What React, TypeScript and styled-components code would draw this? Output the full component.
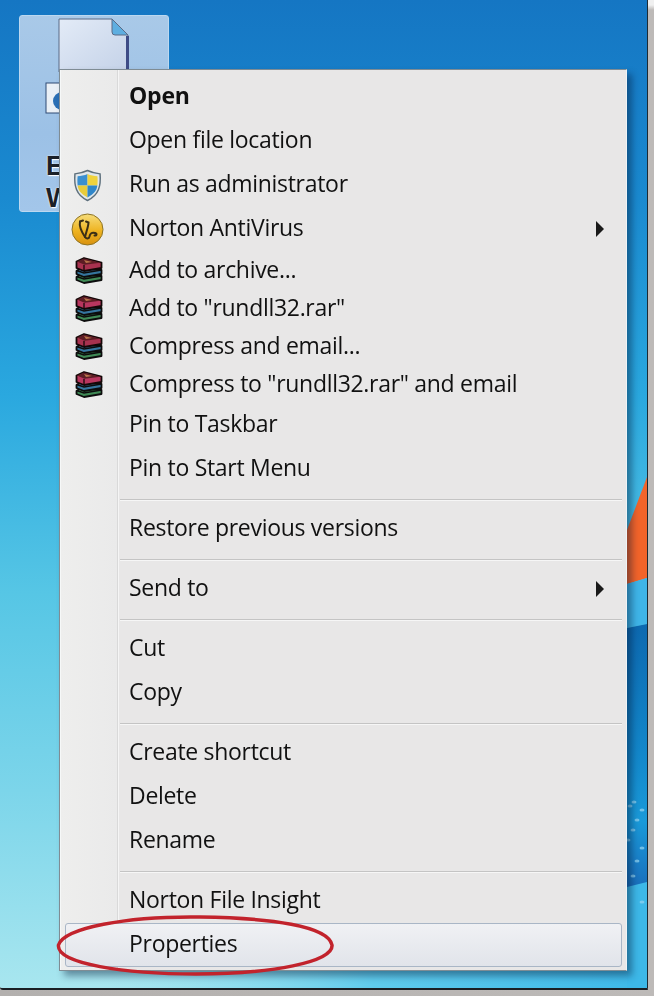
import React from "react";
import styled, { createGlobalStyle } from "styled-components";

const Global = createGlobalStyle`
  html, body { margin: 0; padding: 0; background: #b7b4b2; }
  #root { width: 654px; height: 996px; overflow: hidden; }
`;

const Screen = styled.div`
  position: relative;
  width: 654px;
  height: 996px;
  background:
    linear-gradient(180deg, #f0f0f0 0, #f0f0f0 5px, rgba(240, 240, 240, 0) 10px),
    linear-gradient(90deg, #b3b0ae, #bdbab8);
`;

const Desktop = styled.div`
  position: relative;
  width: 647px;
  height: 988px;
  overflow: hidden;
  border-right: 1px solid #1d2a33;
  border-bottom: 2px solid #1a1f24;
  border-bottom-left-radius: 3px;
  box-sizing: content-box;
`;

const Wallpaper = styled.svg`
  position: absolute;
  inset: 0;
  display: block;
`;

const SelectedIcon = styled.div`
  position: absolute;
  left: 19px;
  top: 15px;
  width: 150px;
  height: 197px;
  box-sizing: border-box;
  border: 1px solid #bcd8f0;
  border-radius: 3px;
  background: linear-gradient(180deg, #a9c9e8, #9cc1e6 60%, #a3c6ea);
`;

const IconArt = styled.svg`
  position: absolute;
  inset: 0;
  display: block;
`;

const IconLabel = styled.div`
  position: absolute;
  left: 46px;
  top: 150px;
  font-family: "Liberation Sans", sans-serif;
  font-size: 27px;
  font-weight: 700;
  line-height: 32px;
  color: #1a2028;
  text-shadow: 0 0 2px #fff, 1px 1px 1px #fff;
`;

const Menu = styled.div`
  position: absolute;
  left: 59px;
  top: 69px;
  width: 568px;
  height: 902px;
  box-sizing: border-box;
  padding: 5px 4px 0 0;
  border: 1px solid #7f8c94;
  border-right-color: #eef3f6;
  border-bottom-color: #7f8c94;
  background:
    linear-gradient(#d9d9d9, #d9d9d9) 57px 0 / 1px 100% no-repeat,
    linear-gradient(#f5f5f5, #f5f5f5) 58px 0 / 1px 100% no-repeat,
    linear-gradient(90deg, #eeeeed 0, #eaeaea 57px, #e8e7e7 59px);
  box-shadow: 5px 5px 7px rgba(0, 20, 50, 0.42), inset 1px 0 0 #f6f8f8;
  font-family: "Open Sans", sans-serif;
  color: #111;
`;

const Row = styled.div<{ $short?: boolean; $selected?: boolean }>`
  display: grid;
  grid-template-columns: ${(p) => (p.$selected ? "54px" : "60px")} 1fr 30px;
  align-items: center;
  height: ${(p) => (p.$short ? "38px" : "44px")};
  box-sizing: border-box;
  ${(p) =>
    p.$selected &&
    `
    margin-left: 5px;
    border: 1px solid #a9b6c6;
    border-radius: 3px;
    background: linear-gradient(180deg, #f0f1f4, #e1e4ea);
  `}
`;

const Gutter = styled.div`
  display: flex;
  justify-content: center;
  align-items: center;
  padding-right: 6px;
  height: 100%;
`;

const Label = styled.span<{ $bold?: boolean; $short?: boolean }>`
  padding: 0 0 ${(p) => (p.$short ? "2px" : "4px")} 9px;
  font-size: 23px;
  letter-spacing: ${(p) => (p.$bold ? "-0.2px" : "-0.3px")};
  line-height: 1;
  white-space: nowrap;
  font-weight: ${(p) => (p.$bold ? 700 : 400)};
  filter: blur(0.35px);
`;

const Arrow = styled.span`
  width: 0;
  height: 0;
  margin-left: 4px;
  border-top: 8px solid transparent;
  border-bottom: 8px solid transparent;
  border-left: 8px solid #1a1a1a;
`;

const Separator = styled.div`
  height: 16px;
  margin-left: 60px;
  box-sizing: border-box;
  padding-top: 8px;
  &::after {
    content: "";
    display: block;
    height: 1px;
    background: #c4c4c4;
    box-shadow: 0 1px 0 #f6f6f6;
  }
`;

const Ring = styled.svg`
  position: absolute;
  left: 56px;
  top: 912px;
  display: block;
  pointer-events: none;
`;

const RarArt = styled.svg`
  margin-left: 4px;
  display: block;
`;

const Shield = () => (
  <svg width="29" height="33" viewBox="0 0 30 34">
    <path d="M15 1.5 C20 4 24 4.5 28 5 C29 17 27 27 15 32.5 C3 27 1 17 2 5 C6 4.5 10 4 15 1.5 Z" fill="#dfe6ea" stroke="#5d6f7c" strokeWidth="1.5" />
    <path d="M15 5 L15 17 L4.8 17 C4.4 13 4.5 10 4.8 7.4 C8 7 12 6.4 15 5 Z" fill="#3a8fd0" />
    <path d="M15 5 C18 6.4 22 7 25.2 7.4 C25.6 10 25.6 13 25.2 17 L15 17 Z" fill="#efd23d" />
    <path d="M4.8 17 L15 17 L15 29.3 C8 25.6 5.5 22 4.8 17 Z" fill="#e8cc3a" />
    <path d="M15 17 L25.2 17 C24.5 22 22 25.6 15 29.3 Z" fill="#2f86c9" />
  </svg>
);

const Norton = () => (
  <svg width="33" height="33" viewBox="0 0 33 33">
    <defs>
      <linearGradient id="nortonFill" x1="0" y1="0" x2="0" y2="1">
        <stop offset="0" stopColor="#f6dd7a" />
        <stop offset="0.55" stopColor="#eeb321" />
        <stop offset="1" stopColor="#d9920f" />
      </linearGradient>
    </defs>
    <circle cx="16.5" cy="16.5" r="15.5" fill="url(#nortonFill)" stroke="#8d7325" strokeWidth="1" />
    <path d="M9 8.5 C8 13 10 18 14 24 C15.5 26 18 26 18.5 23.5 C19 20.5 21 19 24 20 C26.5 21 25.5 23 23.5 22.5" fill="none" stroke="#3b2f16" strokeWidth="2" strokeLinecap="round" />
    <path d="M9 8.5 L12 7.5 M14 24 C15.5 18 17.5 13 17.5 9.5 L15 8.5" fill="none" stroke="#3b2f16" strokeWidth="2" strokeLinecap="round" />
  </svg>
);

const Rar = ({ top = "#a8324f", mid = "#35759e", low = "#3f8a55" }: { top?: string; mid?: string; low?: string }) => (
  <RarArt width="28" height="27" viewBox="0 0 28 27">
    <path d="M1.5 20 L6 17 L26.5 19 L26.5 23 L9 26 L1.5 23 Z" fill={low} stroke="#0c0c0c" strokeWidth="1.8" strokeLinejoin="round" />
    <path d="M1.5 19.5 L9 22 L26.5 19" fill="none" stroke="#0c0c0c" strokeWidth="1.4" />
    <path d="M1.5 14 L6 11 L26.5 13 L26.5 17 L9 20 L1.5 17 Z" fill={mid} stroke="#0c0c0c" strokeWidth="1.8" strokeLinejoin="round" />
    <path d="M1.5 13.5 L9 16 L26.5 13" fill="none" stroke="#0c0c0c" strokeWidth="1.4" />
    <path d="M1.5 4.5 L9 1 L26.5 5.5 L26.5 11 L9 14 L1.5 11 Z" fill={top} stroke="#140707" strokeWidth="1.8" strokeLinejoin="round" />
    <path d="M2 4.5 L9 1.5 L25.5 5.7 L9.5 7.8 Z" fill="#5c1c24" />
    <path d="M9 3 L17 5 L11 6 Z" fill="#b8744a" />
    <path d="M9 8 L9 13.5" stroke="#140707" strokeWidth="1.3" />
  </RarArt>
);

type Item = { text: string; bold?: boolean; short?: boolean; icon?: React.ReactNode; arrow?: boolean; selected?: boolean };

const groups: Item[][] = [
  [
    { text: "Open", bold: true },
    { text: "Open file location" },
    { text: "Run as administrator", icon: <Shield /> },
    { text: "Norton AntiVirus", icon: <Norton />, arrow: true },
    { text: "Add to archive...", short: true, icon: <Rar /> },
    { text: 'Add to "rundll32.rar"', short: true, icon: <Rar top="#b8365f" /> },
    { text: "Compress and email...", short: true, icon: <Rar /> },
    { text: 'Compress to "rundll32.rar" and email', short: true, icon: <Rar top="#b8365f" /> },
    { text: "Pin to Taskbar" },
    { text: "Pin to Start Menu" },
  ],
  [{ text: "Restore previous versions" }],
  [{ text: "Send to", arrow: true }],
  [{ text: "Cut" }, { text: "Copy" }],
  [{ text: "Create shortcut" }, { text: "Delete" }, { text: "Rename" }],
  [{ text: "Norton File Insight" }, { text: "Properties", selected: true }],
];

const bubbles = [
  [634, 802], [642, 810], [630, 806], [637, 820], [633, 830], [628, 840], [642, 848], [637, 861], [633, 876], [642, 902],
];

export default function App() {
  return (
    <Screen>
      <Global />
      <Desktop>
        <Wallpaper width="647" height="988" viewBox="0 0 647 988">
          <defs>
            <linearGradient id="sky" x1="0" y1="0" x2="0" y2="1">
              <stop offset="0" stopColor="#1576c3" />
              <stop offset="0.2" stopColor="#1a8ad0" />
              <stop offset="0.4" stopColor="#2aa8df" />
              <stop offset="0.6" stopColor="#56c6e5" />
              <stop offset="0.8" stopColor="#7cd5ea" />
              <stop offset="1" stopColor="#a8e6ef" />
            </linearGradient>
            <linearGradient id="band" x1="0" y1="0" x2="1" y2="0">
              <stop offset="0" stopColor="#a8e6ef" stopOpacity="0.4" />
              <stop offset="0.5" stopColor="#5fcbec" />
              <stop offset="1" stopColor="#3db8e8" />
            </linearGradient>
            <linearGradient id="deep" x1="0" y1="0" x2="0" y2="1">
              <stop offset="0" stopColor="#0d69b0" />
              <stop offset="0.5" stopColor="#1388cb" />
              <stop offset="0.75" stopColor="#1a9ad9" />
              <stop offset="1" stopColor="#1a6fbd" />
            </linearGradient>
          </defs>
          <rect width="647" height="988" fill="url(#sky)" />
          <rect x="100" y="880" width="547" height="108" fill="url(#band)" />
          <rect x="627" y="880" width="20" height="108" fill="#3db8e8" />
          <polygon points="627,530 647,477 647,578 627,584" fill="#f2642a" />
          <polygon points="627,584 647,578 647,624 627,628" fill="#3fb5e8" />
          <polygon points="627,628 647,624 647,882 627,887" fill="url(#deep)" />
          {bubbles.map(([x, y]) => (
            <ellipse key={`${x}-${y}`} cx={x} cy={y} rx="2.5" ry="1.5" fill="#8fd2f0" opacity="0.75" />
          ))}
        </Wallpaper>
        <SelectedIcon />
        <IconArt width="647" height="988" viewBox="0 0 647 988">
          <defs>
            <linearGradient id="page" x1="0" y1="0" x2="1" y2="1">
              <stop offset="0" stopColor="#e3ebf7" />
              <stop offset="1" stopColor="#c4d2e8" />
            </linearGradient>
          </defs>
          <path d="M59 19 H112 L128 35 V72 H59 Z" fill="url(#page)" stroke="#5a6a86" strokeWidth="1" />
          <path d="M112 19 L128 35 H115 Q112 35 112 32 Z" fill="#5eaee0" stroke="#5a6a86" strokeWidth="1" />
          <rect x="126" y="36" width="3" height="33" fill="#3e4c86" />
          <rect x="46" y="83" width="16" height="30" fill="#eaf0f6" stroke="#2f4a74" strokeWidth="1" />
          <circle cx="62" cy="101" r="9" fill="#2a6fb5" />
        </IconArt>
        <IconLabel>
          E
          <br />W
        </IconLabel>
        <Menu>
          {groups.map((group, g) => (
            <React.Fragment key={g}>
              {g > 0 && <Separator />}
              {group.map((item) => (
                <Row key={item.text} $short={item.short} $selected={item.selected}>
                  <Gutter>{item.icon}</Gutter>
                  <Label $bold={item.bold} $short={item.short}>{item.text}</Label>
                  {item.arrow ? <Arrow /> : <span />}
                </Row>
              ))}
            </React.Fragment>
          ))}
        </Menu>
        <Ring width="282" height="68" viewBox="0 0 282 68">
          <path
            d="M2.5 33 C8 16 70 4 144 5 C215 6 272 14 276 33 C278 50 215 62 140 62 C70 62 0 52 2.5 33 Z"
            fill="none"
            stroke="#c2232c"
            strokeWidth="3.5"
          />
        </Ring>
      </Desktop>
    </Screen>
  );
}
